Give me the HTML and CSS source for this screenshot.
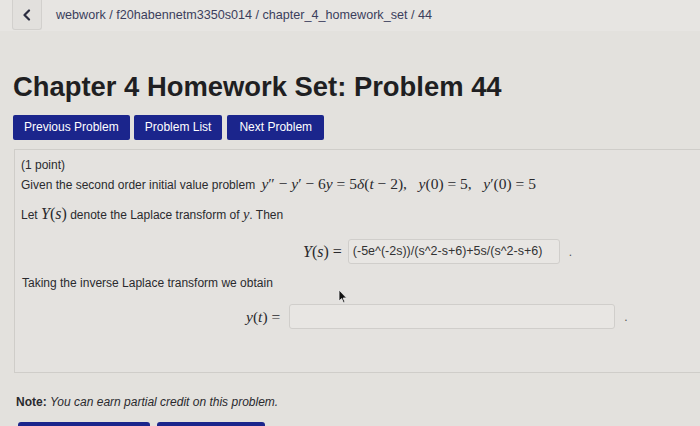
FILE: index.html
```html
<!DOCTYPE html>
<html>
<head>
<meta charset="utf-8">
<link rel="stylesheet" href="styles.css">
</head>
<body>
<div class="topbar">
  <div class="back"><svg width="10" height="12" viewBox="0 0 10 12"><path d="M7 1.5 L2.5 6 L7 10.5" fill="none" stroke="#2b2d40" stroke-width="2.2" stroke-linecap="round" stroke-linejoin="round"/></svg></div>
  <div class="crumbs">webwork / f20habennetm3350s014 / chapter_4_homework_set / 44</div>
</div>
<h1 class="title">Chapter 4 Homework Set: Problem 44</h1>
<div class="nav">
  <span class="btn">Previous Problem</span>
  <span class="btn">Problem List</span>
  <span class="btn next">Next Problem</span>
</div>
<div class="problem">
  <div class="pts">(1 point)</div>
  <div class="line">Given the second order initial value problem <span class="m eq"><i>y</i>″ − <i>y</i>′ − 6<i>y</i> = 5<i>δ</i>(<i>t</i> − 2),&nbsp;&nbsp;&nbsp;<i>y</i>(0) = 5,&nbsp;&nbsp;&nbsp;<i>y</i>′(0) = 5</span></div>
  <div class="line2">Let <span class="m big"><i>Y</i>(<i>s</i>)</span> denote the Laplace transform of <span class="m"><i>y</i></span>. Then</div>
  <div class="ans ans1">
    <span class="m big lbl"><i>Y</i>(<i>s</i>) =</span>
    <span class="inp inp1">(-5e^(-2s))/(s^2-s+6)+5s/(s^2-s+6)</span>
    <span class="dot">.</span>
  </div>
  <div class="line3">Taking the inverse Laplace transform we obtain</div>
  <div class="ans ans2">
    <span class="m lbl yt"><i>y</i>(<i>t</i>) =</span>
    <span class="inp inp2"></span>
    <span class="dot">.</span>
  </div>
</div>
<div class="note"><b>Note:</b> <i>You can earn partial credit on this problem.</i></div>
<div class="bottom">
  <span class="bbtn b1"></span>
  <span class="bbtn b2"></span>
</div>
<svg class="cursor" width="10" height="16" viewBox="0 0 10 16"><path d="M1 1 L1 12 L3.6 9.6 L5.6 14 L7 13.3 L5.1 9 L8.6 9 Z" fill="#111" stroke="#eee" stroke-width="0.8"/></svg>
</body>
</html>
```
FILE: styles.css
```css
html, body {
  margin: 0;
  padding: 0;
  overflow: hidden;
}
body {
  width: 700px;
  height: 426px;
  background: #e3e1dd;
  font-family: "Liberation Sans", Arial, sans-serif;
  color: #2a2a2e;
  position: relative;
}
.topbar {
  height: 31px;
  display: flex;
  align-items: center;
  background: #e7e5e2;
}
.back {
  width: 30px;
  height: 30px;
  margin-left: 12px;
  margin-top: -1px;
  border: 1px solid #d2d0cd;
  border-top: none;
  border-radius: 0 0 3px 3px;
  background: #e2e0dd;
  display: flex;
  align-items: center;
  justify-content: center;
  box-sizing: border-box;
}
.crumbs {
  margin-left: 14px;
  font-size: 12.6px;
  color: #3b3e5c;
  margin-top: -1px;
}
.title {
  margin: 40px 0 0 13px;
  font-size: 27.4px;
  line-height: 32px;
  font-weight: bold;
  color: #1f1f22;
}
.nav {
  display: flex;
  gap: 4px;
  margin: 12px 0 0 13px;
}
.btn {
  background: #1b258c;
  color: #fff;
  font-size: 12px;
  height: 25px;
  line-height: 25px;
  padding: 0 11px;
  border-radius: 2px;
}
.next {
  margin-left: 1px;
  padding: 0 12px;
}
.problem {
  margin: 9px 0 0 14px;
  width: 686px;
  height: 224px;
  border: 1px solid #cfcdc9;
  border-right: none;
  background: #e4e2df;
  box-sizing: border-box;
  padding: 7px 0 0 6px;
  font-size: 12px;
  color: #2a2a2e;
}
.pts {
  line-height: 16px;
}
.line {
  line-height: 20px;
  margin-top: 1px;
}
.line2 {
  margin-top: 9px;
  line-height: 20px;
}
.m {
  font-family: "Liberation Serif", "Times New Roman", serif;
  font-size: 14.5px;
}
.eq {
  font-size: 15.5px;
  margin-left: 3px;
}
.big {
  font-size: 16px;
}
.ans {
  display: flex;
  align-items: center;
  gap: 5px;
}
.ans1 {
  margin: 14px 0 0 282px;
}
.lbl {
  margin-right: 1px;
}
.yt {
  font-size: 15.5px;
  margin-right: 4px;
}
.inp {
  display: block;
  height: 25px;
  box-sizing: border-box;
  border: 1px solid #d0cecb;
  border-radius: 3px;
  background: #e8e6e3;
  font-size: 12.5px;
  line-height: 23px;
  padding-left: 4px;
  color: #333;
}
.inp1 {
  width: 212px;
}
.inp2 {
  width: 326px;
}
.dot {
  margin-left: 4px;
  color: #555;
}
.line3 {
  margin-top: 9px;
  line-height: 20px;
  padding-left: 1px;
}
.ans2 {
  margin: 11px 0 0 225px;
}
.note {
  margin: 22px 0 0 16px;
  font-size: 12px;
  color: #2a2a2e;
}
.bottom {
  display: flex;
  gap: 7px;
  margin: 13px 0 0 18px;
}
.bbtn {
  height: 20px;
  background: #1b258c;
  border-radius: 3px;
}
.b1 { width: 132px; }
.b2 { width: 108px; }
.cursor {
  position: absolute;
  left: 338px;
  top: 289px;
}
```
